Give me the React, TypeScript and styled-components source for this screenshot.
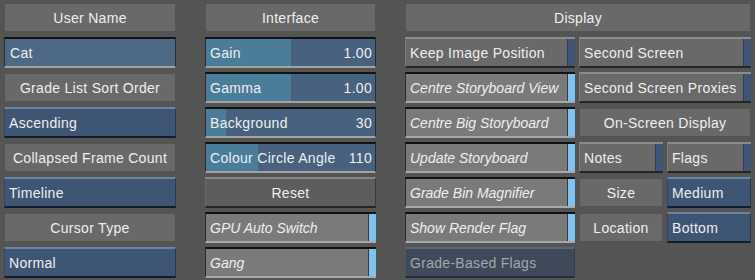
import React from "react";
import styled, { createGlobalStyle, css } from "styled-components";

const Global = createGlobalStyle`
  html, body { margin: 0; padding: 0; background: #545454; }
  body { font-family: "Liberation Sans", Arial, sans-serif; font-size: 14px; letter-spacing: 0.3px; color: #eeeeee; }
`;

const Page = styled.div`
  display: grid;
  grid-template-columns: 172px 171px 346px;
  column-gap: 29px;
  padding: 2px 0 0 4px;
  width: 755px;
  height: 280px;
  box-sizing: border-box;
  overflow: hidden;
`;

const Column = styled.div`
  display: grid;
  grid-auto-rows: 31px;
  row-gap: 4px;
`;

const DisplayGrid = styled.div`
  display: grid;
  grid-template-columns: 170px 84px 84px;
  grid-auto-rows: 31px;
  column-gap: 4px;
  row-gap: 4px;
`;

const cellBase = css`
  box-sizing: border-box;
  display: flex;
  align-items: center;
  white-space: nowrap;
  overflow: hidden;
  min-width: 0;
`;

const Header = styled.div<{ $span?: number }>`
  ${cellBase};
  justify-content: center;
  margin: 2px 1px;
  background: #696969;
  color: #efefef;
  grid-column: span ${(p) => p.$span ?? 1};
`;

const TextField = styled.div`
  ${cellBase};
  padding-left: 5px;
  background: #4e6986;
  border-top: 2px solid #121212;
  border-left: 1px solid #2c2c2c;
  border-right: 1px solid #2c2c2c;
  border-bottom: 2px solid #a3a3a3;
`;

const Dropdown = styled.div<{ $span?: number }>`
  ${cellBase};
  padding-left: 4px;
  background: #3f5574;
  border-top: 2px solid #6b82a0;
  border-left: 1px solid #33455f;
  border-right: 1px solid #2a3850;
  border-bottom: 2px solid #141b2b;
  grid-column: span ${(p) => p.$span ?? 1};
`;

const SliderBox = styled.div`
  ${cellBase};
  position: relative;
  justify-content: space-between;
  padding: 0 3px 0 4px;
  background: #47617f;
  border-top: 2px solid #121212;
  border-left: 1px solid #2c2c2c;
  border-right: 1px solid #2c2c2c;
  border-bottom: 2px solid #a3a3a3;
`;

const SliderFill = styled.div`
  position: absolute;
  left: 0;
  top: 0;
  bottom: 0;
  background: #4a7d99;
`;

const SliderText = styled.span`
  position: relative;
`;

const Button = styled.div`
  ${cellBase};
  justify-content: center;
  background: #5d5d5d;
  border-top: 2px solid #858585;
  border-left: 1px solid #6a6a6a;
  border-right: 1px solid #3a3a3a;
  border-bottom: 2px solid #262626;
`;

const Toggle = styled.div<{ $on?: boolean; $span?: number }>`
  ${cellBase};
  position: relative;
  padding-left: 4px;
  padding-right: 10px;
  grid-column: span ${(p) => p.$span ?? 1};
  ${(p) =>
    p.$on
      ? css`
          background: #7a7a7a;
          font-style: italic;
          letter-spacing: 0;
          border-top: 2px solid #121212;
          border-left: 1px solid #2c2c2c;
          border-bottom: 2px solid #a8a8a8;
        `
      : css`
          background: #696969;
          border-top: 2px solid #8c8c8c;
          border-left: 1px solid #7a7a7a;
          border-bottom: 2px solid #252525;
        `}
`;

const Indicator = styled.div<{ $on?: boolean }>`
  position: absolute;
  right: 0;
  top: 0;
  bottom: 0;
  width: 7px;
  border-left: 1px solid ${(p) => (p.$on ? "#3a3a3a" : "#2e3e55")};
  background: ${(p) => (p.$on ? "#7fc3f1" : "#3f5575")};
`;

const Disabled = styled.div`
  ${cellBase};
  padding-left: 4px;
  background: #3e4a5a;
  color: #a3a6aa;
  border-top: 2px solid #5a6676;
  border-left: 1px solid #4a5666;
  border-right: 1px solid #333e4c;
  border-bottom: 2px solid #262e3a;
`;

const Slider = ({ label, value, pct }: { label: string; value: string; pct: number }) => (
  <SliderBox>
    <SliderFill style={{ width: `${pct}%` }} />
    <SliderText>{label}</SliderText>
    <SliderText>{value}</SliderText>
  </SliderBox>
);

const Tog = ({ label, on, span }: { label: string; on?: boolean; span?: number }) => (
  <Toggle $on={on} $span={span}>
    {label}
    <Indicator $on={on} />
  </Toggle>
);

export default function App() {
  return (
    <>
      <Global />
      <Page>
        <Column>
          <Header>User Name</Header>
          <TextField>Cat</TextField>
          <Header>Grade List Sort Order</Header>
          <Dropdown>Ascending</Dropdown>
          <Header>Collapsed Frame Count</Header>
          <Dropdown>Timeline</Dropdown>
          <Header>Cursor Type</Header>
          <Dropdown>Normal</Dropdown>
        </Column>
        <Column>
          <Header>Interface</Header>
          <Slider label="Gain" value="1.00" pct={50} />
          <Slider label="Gamma" value="1.00" pct={50} />
          <Slider label="Background" value="30" pct={12} />
          <Slider label="Colour Circle Angle" value="110" pct={31} />
          <Button>Reset</Button>
          <Tog label="GPU Auto Switch" on />
          <Tog label="Gang" on />
        </Column>
        <DisplayGrid>
          <Header $span={3}>Display</Header>
          <Tog label="Keep Image Position" />
          <Tog label="Second Screen" span={2} />
          <Tog label="Centre Storyboard View" on />
          <Tog label="Second Screen Proxies" span={2} />
          <Tog label="Centre Big Storyboard" on />
          <Header $span={2}>On-Screen Display</Header>
          <Tog label="Update Storyboard" on />
          <Tog label="Notes" />
          <Tog label="Flags" />
          <Tog label="Grade Bin Magnifier" on />
          <Header>Size</Header>
          <Dropdown>Medium</Dropdown>
          <Tog label="Show Render Flag" on />
          <Header>Location</Header>
          <Dropdown>Bottom</Dropdown>
          <Disabled>Grade-Based Flags</Disabled>
        </DisplayGrid>
      </Page>
    </>
  );
}
